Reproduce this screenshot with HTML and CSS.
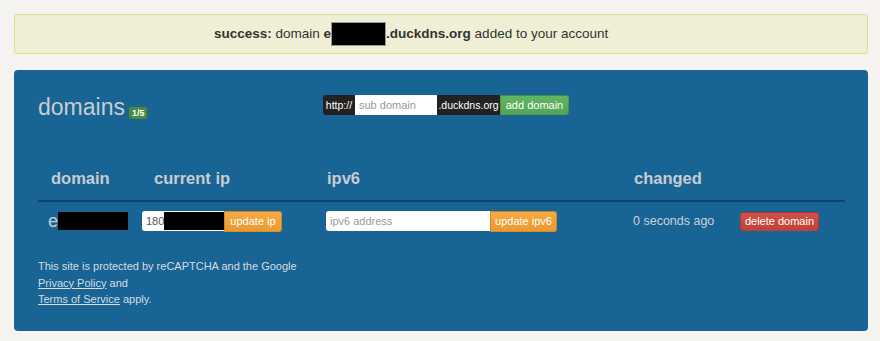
FILE: index.html
```html
<!DOCTYPE html>
<html lang="en">
<head>
  <meta charset="UTF-8">
  <title>Duck DNS - domains</title>
  <link rel="stylesheet" href="styles.css">
</head>
<body>

  <div class="alert">
    <strong>success:</strong> domain <strong>e<span class="redact alert-redact"></span>.duckdns.org</strong> added to your account
  </div>

  <div class="panel">
    <div class="panel-top">
      <h2 class="title">domains<span class="badge">1/5</span></h2>
      <form class="add-form" onsubmit="event.preventDefault();">
        <span class="addon addon-http">http://</span>
        <input type="text" class="sub" placeholder="sub domain">
        <span class="addon addon-dns">.duckdns.org</span>
        <button type="submit" class="btn btn-green">add domain</button>
      </form>
    </div>

    <div class="thead">
      <div class="th">domain</div>
      <div class="th">current ip</div>
      <div class="th">ipv6</div>
      <div class="th">changed</div>
    </div>

    <div class="trow">
      <div class="td domain-name">e<span class="redact row-redact"></span></div>
      <div class="td">
        <div class="group">
          <div class="ip-field">180<span class="redact ip-redact"></span></div>
          <button class="btn btn-orange btn-ip">update ip</button>
        </div>
      </div>
      <div class="td">
        <div class="group">
          <input type="text" class="ipv6" placeholder="ipv6 address">
          <button class="btn btn-orange btn-ipv6">update ipv6</button>
        </div>
      </div>
      <div class="td changed">0 seconds ago</div>
      <div class="td">
        <button class="btn btn-red">delete domain</button>
      </div>
    </div>

    <p class="captcha">
      This site is protected by reCAPTCHA and the Google<br>
      <a href="#">Privacy Policy</a> and<br>
      <a href="#">Terms of Service</a> apply.
    </p>
  </div>

</body>
</html>
```

FILE: styles.css
```css
body {
  margin: 0;
  padding: 14px 12px 0 14px;
  background: #f4f3ef;
  font-family: 'Liberation Sans', Arial, sans-serif;
  color: #333;
}

.alert {
  height: 40px;
  box-sizing: border-box;
  padding-left: 199px;
  line-height: 38px;
  background: #efefd5;
  border: 1px solid #dfdf8c;
  border-radius: 3px;
  font-size: 13.5px;
  white-space: nowrap;
}

.redact {
  display: inline-block;
  background: #000;
  vertical-align: middle;
}

.alert-redact {
  width: 55px;
  height: 24px;
  border: 1px solid #999;
  box-sizing: border-box;
}

.panel {
  margin-top: 16px;
  height: 261px;
  box-sizing: border-box;
  background: #186494;
  border-radius: 4px;
  padding: 23px 23px 0 24px;
  color: #c9d0d6;
}

.panel-top {
  display: flex;
  align-items: flex-start;
  height: 58px;
}

.title {
  width: 285px;
  margin: 0;
  font-size: 23px;
  font-weight: normal;
  color: #c9cdd1;
  line-height: 28px;
}

.badge {
  display: inline-block;
  margin-left: 4px;
  padding: 0 3px;
  height: 12px;
  line-height: 12px;
  background: #4a8b3a;
  color: #fff;
  font-size: 9px;
  font-weight: bold;
  border-radius: 2px;
  vertical-align: -1px;
}

.add-form {
  display: flex;
  margin-top: 2px;
  height: 20px;
}

.addon {
  background: #222;
  color: #fff;
  font-size: 10.5px;
  line-height: 20px;
  text-align: center;
  white-space: nowrap;
}

.addon-http {
  width: 32px;
  border-radius: 3px 0 0 3px;
}

.addon-dns {
  width: 63px;
}

.sub, .ipv6 {
  border: none;
  margin: 0;
  padding: 0 4px;
  font-size: 11px;
  font-family: 'Liberation Sans', Arial, sans-serif;
  height: 20px;
  box-sizing: border-box;
  outline: none;
}

.sub {
  width: 82px;
}

.sub::placeholder, .ipv6::placeholder {
  color: #999;
}

.btn {
  border: 1px solid rgba(0,0,0,0.15);
  margin: 0;
  color: #fff;
  font-size: 11px;
  font-family: 'Liberation Sans', Arial, sans-serif;
  height: 20px;
  padding: 0;
  border-radius: 3px;
  white-space: nowrap;
  cursor: pointer;
}

.btn-green {
  background: linear-gradient(#62b562, #52a552);
  border-radius: 0 3px 3px 0;
  width: 69px;
}

.btn-orange {
  background: linear-gradient(#f4aa45, #ec9a2e);
  border-radius: 0 3px 3px 0;
  height: 21px;
}

.btn-ip {
  width: 58px;
}

.btn-ipv6 {
  width: 67px;
}

.btn-red {
  background: linear-gradient(#d0504a, #c1413a);
  width: 79px;
  height: 19px;
}

.thead {
  display: grid;
  grid-template-columns: 103px 173px 307px 1fr;
  border-bottom: 2px solid #0f4470;
  height: 51px;
  box-sizing: border-box;
}

.th {
  padding: 18px 0 0 13px;
  font-size: 16.5px;
  font-weight: bold;
  color: #c7ccd1;
}

.trow {
  display: grid;
  grid-template-columns: 94px 184px 307px 107px 1fr;
  align-items: center;
  height: 38px;
}

.td {
  padding-left: 10px;
}

.domain-name {
  font-size: 18px;
  color: #c6ccd2;
  display: flex;
  align-items: center;
}

.row-redact {
  width: 70px;
  height: 18px;
}

.group {
  display: flex;
  align-items: center;
}

.ip-field {
  width: 82px;
  height: 20px;
  box-sizing: border-box;
  background: #fff;
  border-radius: 3px 0 0 3px;
  color: #555;
  font-size: 11px;
  display: flex;
  align-items: center;
  padding-left: 4px;
}

.ip-redact {
  width: 62px;
  height: 18px;
}

.ipv6 {
  width: 164px;
  border-radius: 3px 0 0 3px;
}

.changed {
  font-size: 12.5px;
  color: #c9d1d8;
}

.captcha {
  margin: 18px 0 0;
  font-size: 11px;
  line-height: 16.5px;
  color: #d6dce1;
}

.captcha a {
  color: #d6dce1;
}
```
